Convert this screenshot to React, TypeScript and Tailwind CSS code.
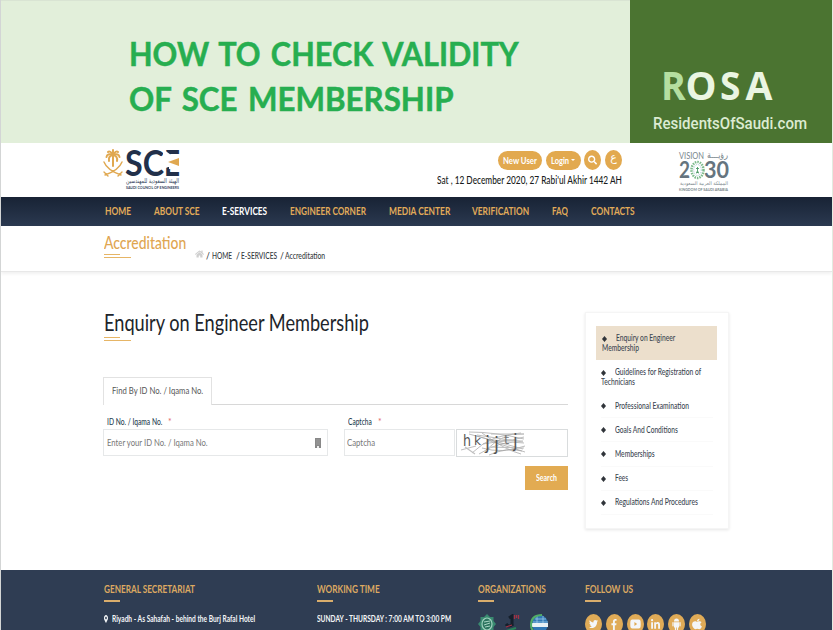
import { useLayoutEffect, useRef } from "react";
import type { ReactNode } from "react";
import { FaApple, FaFacebookF, FaHome, FaLinkedinIn, FaMapMarkerAlt, FaSearch, FaTwitter, FaYoutube } from "react-icons/fa";

type FitProps = {
  className: string;
  children: ReactNode;
};

// Condenses a single line of text to the width of its box.
function Fit({ className, children }: FitProps) {
  const outerRef = useRef<HTMLSpanElement | null>(null);
  const innerRef = useRef<HTMLSpanElement | null>(null);

  useLayoutEffect(() => {
    const outer = outerRef.current;
    const inner = innerRef.current;

    if (!outer || !inner) {
      return;
    }

    inner.style.transform = `scaleX(${outer.clientWidth / inner.offsetWidth})`;
  }, [children]);

  return (
    <span ref={outerRef} className={`block shrink-0 ${className}`}>
      <span ref={innerRef} className="inline-block origin-left whitespace-nowrap align-top">
        {children}
      </span>
    </span>
  );
}

const navItems = [
  { label: "HOME", width: "w-[26px]" },
  { label: "ABOUT SCE", width: "w-[46px]" },
  { label: "E-SERVICES", width: "w-[45px]", active: true },
  { label: "ENGINEER CORNER", width: "w-[76px]" },
  { label: "MEDIA CENTER", width: "w-[61px]" },
  { label: "VERIFICATION", width: "w-[57px]" },
  { label: "FAQ", width: "w-[16px]" },
  { label: "CONTACTS", width: "w-[44px]" },
];

const sideItems = [
  { label: "Professional Examination", width: "w-[74px]" },
  { label: "Goals And Conditions", width: "w-[63px]" },
  { label: "Memberships", width: "w-[40px]" },
  { label: "Fees", width: "w-[13px]" },
  { label: "Regulations And Procedures", width: "w-[83px]" },
];

function AndroidIcon({ className }: { className?: string }) {
  return (
    <svg viewBox="0 0 18 20" className={className} preserveAspectRatio="none" fill="currentColor">
      <path d="M4 6Q4 1 9 1Q14 1 14 6ZM4 7H14V16H4Z" />
      <path d="M2 8V13M16 8V13M7 15V19M11 15V19" stroke="currentColor" strokeWidth="2.500" strokeLinecap="round" />
    </svg>
  );
}

const socials = [
  { name: "twitter", icon: <FaTwitter className="h-[10px] w-[9px]" preserveAspectRatio="none" /> },
  { name: "facebook", icon: <FaFacebookF className="h-[11px] w-[6px]" preserveAspectRatio="none" /> },
  { name: "youtube", icon: <FaYoutube className="h-[12px] w-[11px]" preserveAspectRatio="none" /> },
  { name: "linkedin", icon: <FaLinkedinIn className="h-[11px] w-[9px]" preserveAspectRatio="none" /> },
  { name: "android", icon: <AndroidIcon className="h-[12px] w-[9px]" /> },
  { name: "apple", icon: <FaApple className="h-[12px] w-[10px]" preserveAspectRatio="none" /> },
];

function Banner() {
  return (
    <div className="flex h-[143px] bg-[#e2efda]">
      <div className="w-[628.500px] border-t border-[#d9e4d3] pt-[30px] pl-[128px] text-[33px] leading-[45px] font-bold text-[#27ae50] [-webkit-text-stroke:0.5px_#27ae50] [word-spacing:3px]">
        <Fit className="w-[390px]">HOW TO CHECK VALIDITY</Fit>
        <Fit className="w-[325px]">OF SCE MEMBERSHIP</Fit>
      </div>
      <div className="flex-1 bg-[#4b7431] pt-[65px] pl-[22px] text-[#eaf5e2]">
        <div className="flex h-[40px] pl-[9px] font-['Open_Sans'] text-[39px] leading-[40px] font-bold">
          <Fit className="w-[25px] text-[#b5dfa0]">R</Fit>
          <Fit className="w-[31px]">O</Fit>
          <Fit className="ml-[3px] w-[20px]">S</Fit>
          <Fit className="ml-[6px] w-[27px]">A</Fit>
        </div>
        <Fit className="mt-[7px] ml-px w-[154px] font-['Roboto'] text-[17px] leading-[22px] font-medium text-[#dcebd2]">
          ResidentsOfSaudi.com
        </Fit>
      </div>
    </div>
  );
}

function SceLogo() {
  return (
    <svg width="78" height="44" viewBox="0 0 78 44" className="overflow-visible">
      <g fill="none" stroke="#e0a850" strokeLinecap="round">
        <path d="M10 8V19M10 8L10 3M10 8Q7 3 5 5M10 8Q4 6 3.500 10M10 8Q5 9 6 14M10 8Q13 3 15 5M10 8Q16 6 16.500 10M10 8Q15 9 14 14" strokeWidth="2" />
        <path d="M1 15Q4 23 18 28M19 15Q16 23 2 28M1 25L5 29M19 25L15 29" strokeWidth="1.400" />
      </g>
      <g fill="#22304a" fontFamily="Lato" fontWeight="700">
        <text x="22" y="28.500" fontSize="36" textLength="39" lengthAdjust="spacingAndGlyphs">SC</text>
        <text x="61" y="28.500" fontSize="36" textLength="16" lengthAdjust="spacingAndGlyphs">E</text>
      </g>
      <path d="M60 2L68 8V19L60 22ZM66 8H78V22H66Z" fill="#fff" />
      <path d="M65 15L76 11V19Z" fill="#e0a850" />
      <text x="76" y="35.500" direction="rtl" fontFamily="DejaVu Sans" fontSize="6.500" fill="#35445c" textLength="53" lengthAdjust="spacingAndGlyphs">الهيئة السعودية للمهندسين</text>
      <text x="23" y="42" fontFamily="Lato" fontWeight="700" fontSize="3.800" fill="#35445c" textLength="53" lengthAdjust="spacingAndGlyphs">SAUDI COUNCIL OF ENGINEERS</text>
    </svg>
  );
}

function VisionLogo() {
  return (
    <svg width="51" height="44" viewBox="0 0 51 44" className="overflow-visible">
      <g fill="#79868c" fontFamily="Lato">
        <text x="0" y="10" fontSize="9" textLength="25" lengthAdjust="spacingAndGlyphs">VISION</text>
        <text x="49" y="9" direction="rtl" fontFamily="DejaVu Sans" fontSize="8.500" textLength="21" lengthAdjust="spacingAndGlyphs">رؤيـــة</text>
        <text x="0" y="28.500" fontSize="22" fontWeight="700" textLength="11" lengthAdjust="spacingAndGlyphs" fill="#66757f">2</text>
        <text x="25" y="28.500" fontSize="22" fontWeight="700" textLength="25" lengthAdjust="spacingAndGlyphs" fill="#66757f">30</text>
        <text x="49" y="36" direction="rtl" fontFamily="DejaVu Sans" fontSize="5" textLength="48" lengthAdjust="spacingAndGlyphs">المملكة العربية السعودية</text>
        <text x="0" y="41.500" fontSize="3.500" fontWeight="700" textLength="49" lengthAdjust="spacingAndGlyphs">KINGDOM OF SAUDI ARABIA</text>
      </g>
      <ellipse cx="18.500" cy="21" rx="6" ry="8" fill="none" stroke="#7dba8c" strokeWidth="2.500" strokeDasharray="1.500 1" />
      <ellipse cx="18.500" cy="21" rx="3.800" ry="5.500" fill="none" stroke="#8fb8c8" strokeWidth=".8" strokeDasharray="1 1" />
      <path d="M18.500 18V23M17 19.500H20M17 23L20 24M20 23L17 24" stroke="#4c9a66" strokeWidth=".9" />
    </svg>
  );
}

function SiteHeader() {
  return (
    <header className="flex h-[54px] pl-[102px]">
      <div className="w-[287px] pt-[4px]">
        <SceLogo />
      </div>
      <div className="flex w-[232px] flex-col items-end pt-[7px]">
        <div className="flex h-[20px] items-center gap-[3.700px] text-[10px] leading-[18px] font-bold text-white">
          <div className="flex h-[19px] w-[44px] justify-center rounded-full bg-[#e2a94f]">
            <Fit className="w-[34px]">New User</Fit>
          </div>
          <div className="flex h-[19px] w-[35px] items-center justify-center gap-[2px] rounded-full bg-[#e2a94f]">
            <Fit className="w-[18px]">Login</Fit>
            <span className="border-x-[2px] border-t-[2px] border-x-transparent border-t-white" />
          </div>
          <div className="flex h-[20px] w-[17px] items-center justify-center rounded-[50%] bg-[#e2a94f]">
            <FaSearch className="h-[10px] w-[9px]" />
          </div>
          <div className="flex h-[20px] w-[17px] items-center justify-center rounded-[50%] bg-[#e2a94f] pb-[4px] font-['DejaVu_Sans'] text-[11px] font-normal">
            ع
          </div>
        </div>
        <Fit className="mt-[3px] w-[185px] text-[10.500px] leading-[14px] font-medium text-[#181b20]">
          Sat , 12 December 2020, 27 Rabi'ul Akhir 1442 AH
        </Fit>
      </div>
      <div className="pt-[6px] pl-[57px]">
        <VisionLogo />
      </div>
    </header>
  );
}

function Captcha() {
  return (
    <svg width="111" height="26" viewBox="0 0 111 26">
      <g fill="none" stroke="#a0a0a0" strokeWidth=".7">
        <path d="M12 2Q38 2 67 9M12 4L66 19M15 23Q36 2 67 4M22 24Q45 9 67 13M20 6Q44 15 67 7M25 18Q45 24 68 16M25 3Q48 20 64 24M29 20Q47 3 64 3M30 10L68 22M4 20L19 16M32 25Q50 17 65 21M26 14Q48 10 66 11" />
        <path d="M20 5L66 12M34 4L67 4M34 17L67 18M8 17L18 24" stroke="#c0c0c0" strokeWidth="1.200" />
      </g>
      <g fill="#555" fontFamily="DejaVu Sans" fontSize="15">
        <text x="6" y="16" textLength="8" lengthAdjust="spacingAndGlyphs">h</text>
        <text x="17" y="15" fontSize="13" textLength="7" lengthAdjust="spacingAndGlyphs">k</text>
        <text x="28" y="19" fontSize="18">j</text>
        <text x="37" y="20" fontSize="18">j</text>
        <text x="47" y="14" fontSize="13" fill="#777">t</text>
        <text x="56" y="17" fontSize="17">j</text>
      </g>
    </svg>
  );
}

function Underline() {
  return (
    <div className="flex flex-col gap-[2px]">
      <span className="h-px w-[16px] bg-[#e6b566]" />
      <span className="h-px w-[27px] bg-[#e6b566]" />
    </div>
  );
}

function EnquiryForm() {
  return (
    <div className="w-[465px]">
      <div className="pl-px">
        <Fit className="w-[265px] text-[22.500px] leading-[28px] text-[#20242a]">Enquiry on Engineer Membership</Fit>
        <Underline />
      </div>

      <div className="mt-[36px] flex h-[28px] items-end">
        <div className="h-[28px] w-[109px] border-x border-t border-[#e2e2e2] pl-2 text-[10px] leading-[25px] text-[#555]">
          <Fit className="w-[91px]">Find By ID No. / Iqama No.</Fit>
        </div>
        <div className="h-px flex-1 bg-[#d8d8d8]" />
      </div>

      <div className="mt-[10px] flex text-[8.500px] leading-[14px] font-medium text-[#27404f]">
        <div className="flex w-[241px] gap-[6px] pl-[4px]">
          <Fit className="w-[55px]">ID No. / Iqama No.</Fit>
          <span className="text-[#e2686b]">*</span>
        </div>
        <div className="flex gap-[6px] pl-[4px]">
          <Fit className="w-[24px]">Captcha</Fit>
          <span className="text-[#e2686b]">*</span>
        </div>
      </div>

      <div className="flex h-[28px] text-[10px] leading-[24px] text-[#777]">
        <div className="flex h-[27px] w-[225px] justify-between border border-[#e6e8e9] pr-[6px] pl-[3px]">
          <Fit className="w-[101px]">Enter your ID No. / Iqama No.</Fit>
          <svg width="6" height="10" viewBox="0 0 6 10" className="mt-[8px]">
            <path d="M0 0H6V10H0Z" fill="#888" />
            <path d="M1 2H5M1 4H5M1 6H5" stroke="#a8a8a8" strokeWidth=".7" />
            <path d="M2 8H4V10H2Z" fill="#eee" />
          </svg>
        </div>
        <div className="ml-4 h-[27px] w-[111px] border border-[#e6e8e9] pl-[2px]">
          <Fit className="w-[28px]">Captcha</Fit>
        </div>
        <div className="ml-px h-[28px] w-[112px] border border-[#d9dcdd]">
          <Captcha />
        </div>
      </div>

      <div className="mt-[9px] flex justify-end">
        <button type="button" className="flex h-[24px] w-[43px] justify-center bg-[#e2ab52] text-[9px] leading-[23px] font-bold text-white">
          <Fit className="w-[21px]">Search</Fit>
        </button>
      </div>
    </div>
  );
}

function Bullet() {
  return (
    <svg width="5" height="6" viewBox="0 0 5 6" className="mt-px shrink-0">
      <path d="M2.500 0L5 3L2.500 6L0 3Z" fill="#30343a" />
    </svg>
  );
}

function Sidebar() {
  return (
    <aside className="h-[217px] w-[144px] border border-[#f5f5f5] px-[10px] pt-[13px] text-[8.500px] leading-[10px] font-medium text-[#3a4550] shadow-[0_1px_3px_rgba(0,0,0,0.1)]">
      <div className="h-[34px] w-[121px] bg-[#ecdfcc] pt-[7px] pl-[6px]">
        <div className="flex items-center gap-[9px]">
          <Bullet />
          <Fit className="w-[59px]">Enquiry on Engineer</Fit>
        </div>
        <Fit className="w-[37px]">Membership</Fit>
      </div>
      <div className="h-[34px] pt-[7px] pl-[5px]">
        <div className="flex items-center gap-[9px]">
          <Bullet />
          <Fit className="w-[86px]">Guidelines for Registration of</Fit>
        </div>
        <Fit className="w-[34px]">Technicians</Fit>
      </div>
      {sideItems.map((item) => (
        <div key={item.label} className="mx-[5px] flex h-[24.200px] items-center gap-[9px] border-b border-[#fafafa]">
          <Bullet />
          <Fit className={item.width}>{item.label}</Fit>
        </div>
      ))}
    </aside>
  );
}

function FooterTitle({ width, children }: { width: string; children: string }) {
  return (
    <div className="text-[11px] leading-[14px] font-bold text-[#dca962]">
      <Fit className={width}>{children}</Fit>
      <div className="mt-[4px] h-[2px] w-[16px] bg-[#d9ad6c]" />
    </div>
  );
}

function Footer() {
  return (
    <footer className="flex h-[60px] overflow-hidden bg-[#2f3d53] pt-[12px] pl-[103px] text-[9px] leading-[12px] font-bold text-[#f4f6f8]">
      <div className="w-[213px]">
        <FooterTitle width="w-[91px]">GENERAL SECRETARIAT</FooterTitle>
        <div className="mt-[11px] flex items-center gap-[4px]">
          <FaMapMarkerAlt className="h-[8px] w-[4px]" preserveAspectRatio="none" />
          <Fit className="w-[143px]">Riyadh - As Sahafah - behind the Burj Rafal Hotel</Fit>
        </div>
      </div>
      <div className="w-[161px]">
        <FooterTitle width="w-[63px]">WORKING TIME</FooterTitle>
        <Fit className="mt-[11px] w-[134px]">SUNDAY - THURSDAY : 7:00 AM TO 3:00 PM</Fit>
      </div>
      <div className="w-[107px]">
        <FooterTitle width="w-[68px]">ORGANIZATIONS</FooterTitle>
        <svg width="80" height="18" viewBox="0 0 80 18" className="mt-[12px]">
          <path d="M9 0L12 3L15.500 3L15.500 7L18 10L15.500 13V18H2.500V13L0 10L2.500 7V3L6 3Z" fill="#398a70" />
          <ellipse cx="9" cy="10" rx="5" ry="6" fill="#2c745f" stroke="#9ed0bd" strokeWidth="1.200" />
          <path d="M6 8L12 7M6 11L12 9M7 13L12 12" stroke="#a8d5c4" strokeWidth="1" />
          <path d="M31 4L34 2V12M28 10Q31 14 35 10" fill="none" stroke="#151f2b" strokeWidth="3" />
          <path d="M36.500 1V5M38.500 4V1M40.500 5V1M28 13L34 11" fill="none" stroke="#a33145" strokeWidth="1.300" />
          <path d="M28 17L38 14" stroke="#288359" strokeWidth="2" />
          <ellipse cx="62" cy="10" rx="8" ry="9" fill="#3177b4" />
          <path d="M57 5H68M55 8H70M59 2V10M65 2V10" stroke="#9bc9e8" strokeWidth=".8" />
          <path d="M54 9H70V13H54Z" fill="#e8f1f5" />
          <path d="M64 1Q53 1 53 11Q53 16 57 18" fill="none" stroke="#52ae67" strokeWidth="2" />
        </svg>
      </div>
      <div>
        <FooterTitle width="w-[48px]">FOLLOW US</FooterTitle>
        <div className="mt-[12px] flex gap-[3.800px]">
          {socials.map((social) => (
            <span key={social.name} className="flex h-[20px] w-[17px] items-center justify-center rounded-[50%] bg-[#e0ab57]">
              {social.icon}
            </span>
          ))}
        </div>
      </div>
    </footer>
  );
}

export default function App() {
  return (
    <div className="h-[630px] w-[833px] overflow-hidden border-r border-l border-r-[#e3ebe0] border-l-[#d3d5d5] bg-white font-['Lato','DejaVu_Sans',sans-serif]">
      <Banner />
      <SiteHeader />
      <nav className="flex h-[29px] gap-[22.700px] bg-linear-to-b from-[#182335] to-[#2b3950] pl-[104px] text-[11px] leading-[28px] font-bold text-[#e2ab59]">
        {navItems.map((item) => (
          <Fit key={item.label} className={item.active ? `${item.width} text-white` : item.width}>
            {item.label}
          </Fit>
        ))}
      </nav>

      <div className="flex h-[46px] border-b border-[#e8e8e8] pl-[103px] shadow-[0_2px_3px_rgba(0,0,0,0.06)]">
        <div className="w-[91px] pt-[5px]">
          <Fit className="mb-px w-[82px] text-[18px] leading-[22px] font-medium text-[#dfa651]">Accreditation</Fit>
          <Underline />
        </div>
        <div className="flex pt-[23px] text-[8.500px] leading-[14px] font-medium text-[#353a40]">
          <FaHome className="mt-px h-[8px] w-[9px] text-[#cfcfcf]" />
          <span className="ml-[2px] w-[3px]">/</span>
          <Fit className="ml-[3px] w-[20px]">HOME</Fit>
          <span className="ml-[4px] w-[3px]">/</span>
          <Fit className="ml-[2px] w-[36px]">E-SERVICES</Fit>
          <span className="ml-[3px] w-[3px]">/</span>
          <Fit className="ml-[2px] w-[40px]">Accreditation</Fit>
        </div>
      </div>

      <main className="flex h-[298px] pl-[102px]">
        <div className="w-[482px] pt-[37px]">
          <EnquiryForm />
        </div>
        <div className="pt-[40px]">
          <Sidebar />
        </div>
      </main>
      <Footer />
    </div>
  );
}
